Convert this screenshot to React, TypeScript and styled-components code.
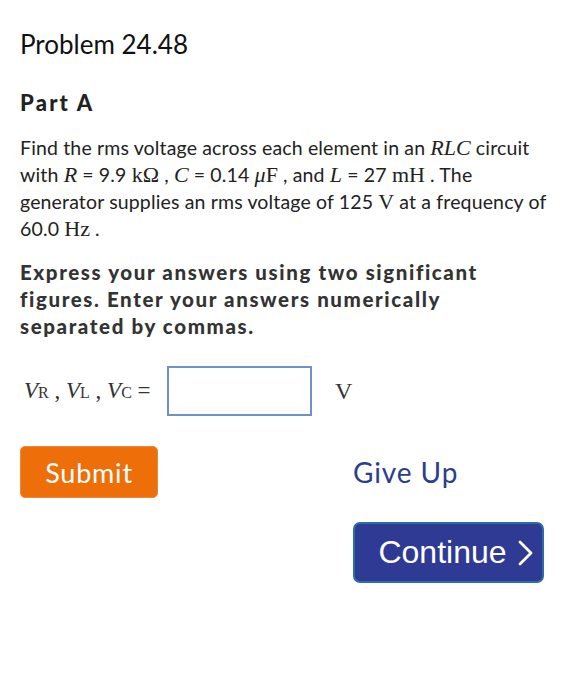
import React from "react";
import styled, { createGlobalStyle } from "styled-components";

const Global = createGlobalStyle`
  html, body { margin: 0; padding: 0; background: #fff; }
  body { font-family: Lato, "Open Sans", sans-serif; color: #222; }
`;

const Page = styled.div`
  padding: 28px 20px 0 20px;
  display: flex;
  flex-direction: column;
`;

const Title = styled.h1`
  margin: 0;
  font-size: 26px;
  font-weight: 400;
  line-height: 32px;
  color: #111;
`;

const PartHeading = styled.h2`
  margin: 30px 0 0 0;
  font-size: 22px;
  font-weight: 900;
  letter-spacing: 2.2px;
  line-height: 26px;
  color: #222;
`;

const Paragraph = styled.p<{ $bold?: boolean; $top: number }>`
  margin: ${(p) => p.$top}px 0 0 0;
  font-size: ${(p) => (p.$bold ? "20.5px" : "19.5px")};
  letter-spacing: ${(p) => (p.$bold ? "1.6px" : "0.15px")};
  line-height: 27px;
  white-space: nowrap;
  font-weight: ${(p) => (p.$bold ? 900 : 400)};
  color: ${(p) => (p.$bold ? "#333" : "#222")};
`;

const M = styled.span<{ $italic?: boolean }>`
  font-family: "Liberation Serif", "DejaVu Serif", serif;
  font-style: ${(p) => (p.$italic ? "italic" : "normal")};
  font-size: 22px;
  letter-spacing: 0;
`;

const Sub = styled.span`
  font-family: "Liberation Serif", serif;
  font-style: normal;
  font-size: 16px;
`;

const AnswerRow = styled.div`
  margin-top: 26px;
  display: flex;
  align-items: center;
  height: 50px;
  padding-left: 4px;
`;

const Label = styled.span`
  font-family: "Liberation Serif", serif;
  font-size: 23px;
  color: #333;
  width: 143px;
`;

const Input = styled.input`
  box-sizing: border-box;
  width: 145px;
  height: 50px;
  border: 2px solid #6f8fd0;
  border-radius: 0;
  outline: none;
  font-size: 18px;
`;

const Unit = styled.span`
  font-family: "Liberation Serif", serif;
  font-size: 24px;
  color: #333;
  margin-left: 23px;
`;

const ButtonRow = styled.div`
  margin-top: 30px;
  display: flex;
  align-items: center;
`;

const SubmitButton = styled.button`
  box-sizing: border-box;
  width: 138px;
  height: 52px;
  background: #ee6e0a;
  border: 1px solid #f08a3a;
  border-radius: 5px;
  color: #fff;
  font-family: Lato, sans-serif;
  font-size: 27px;
  letter-spacing: 0.8px;
  padding: 0;
`;

const GiveUp = styled.button`
  margin-left: 195px;
  background: none;
  border: none;
  padding: 0;
  color: #2e3c8c;
  font-family: Lato, sans-serif;
  font-size: 28px;
  letter-spacing: 0.9px;
`;

const ContinueRow = styled.div`
  margin-top: 24px;
  display: flex;
  justify-content: flex-end;
  padding-right: 2px;
`;

const ContinueButton = styled.button`
  box-sizing: border-box;
  width: 191px;
  height: 61px;
  background: #2e3a93;
  border: 2px solid #2a6fa3;
  border-radius: 7px;
  color: #fff;
  font-family: "Liberation Sans", Arial, sans-serif;
  font-size: 32px;
  display: flex;
  align-items: center;
  justify-content: center;
  gap: 11px;
  padding: 0 0 0 14px;
`;

export default function App() {
  return (
    <>
      <Global />
      <Page>
        <Title>Problem 24.48</Title>
        <PartHeading>Part A</PartHeading>
        <Paragraph $top={18}>
          Find the rms voltage across each element in an <M $italic>RLC</M> circuit
          <br />
          with <M $italic>R</M> = 9.9 <M>kΩ</M> , <M $italic>C</M> = 0.14 <M><i>μ</i>F</M> , and{" "}
          <M $italic>L</M> = 27 <M>mH</M> . The
          <br />
          generator supplies an rms voltage of 125 <M>V</M> at a frequency of
          <br />
          60.0 <M>Hz</M> .
        </Paragraph>
        <Paragraph $bold $top={17}>
          Express your answers using two significant
          <br />
          figures. Enter your answers numerically
          <br />
          separated by commas.
        </Paragraph>
        <AnswerRow>
          <Label>
            <i>V</i><Sub>R</Sub> , <i>V</i><Sub>L</Sub> , <i>V</i><Sub>C</Sub> =
          </Label>
          <Input aria-label="answer" />
          <Unit>V</Unit>
        </AnswerRow>
        <ButtonRow>
          <SubmitButton>Submit</SubmitButton>
          <GiveUp>Give Up</GiveUp>
        </ButtonRow>
        <ContinueRow>
          <ContinueButton>
            Continue
            <svg width="15" height="26" viewBox="0 0 15 26">
              <path d="M2 2 L13 13 L2 24" stroke="#fff" strokeWidth="2.8" fill="none" strokeLinecap="round" strokeLinejoin="round" />
            </svg>
          </ContinueButton>
        </ContinueRow>
      </Page>
    </>
  );
}
